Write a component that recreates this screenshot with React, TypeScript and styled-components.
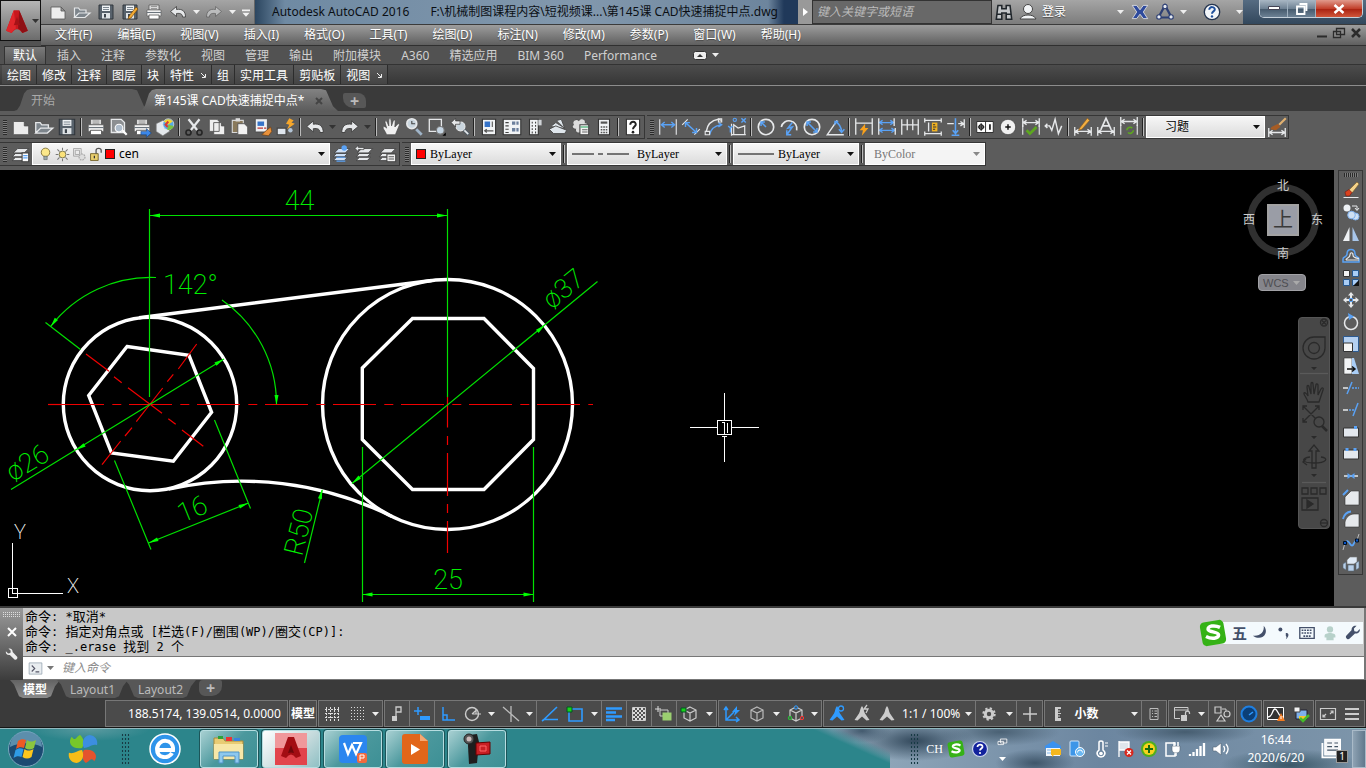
import React from "react";
import styled, { createGlobalStyle, css } from "styled-components";

const GlobalStyle = createGlobalStyle`
  *, *::before { box-sizing: border-box; }
  html, body { margin: 0; background: #3a3a3a; }
  body, button, select, input {
    font-family: "Noto Sans", "Noto Sans CJK SC", sans-serif;
    font-size: 12px;
    line-height: 16px;
  }
  button { border: 0; margin: 0; padding: 0; background: none; color: inherit; cursor: default; }
  a { color: inherit; text-decoration: none; }
`;

/* ---------- icons ---------- */

const W = "#e6e8ea";
const B = "#5aa2f5";
const D = "#2b2b2b";

const printer = (
  <>
    <path d="M5 3h10v5H5z" fill="#d9d9d9" stroke="#444" strokeWidth=".6" />
    <path d="M7 4.500h6M7 6.500h6" stroke="#999" />
    <path d="M3 8h14v6H3z" fill="#f2f2f2" stroke="#555" strokeWidth=".6" />
    <path d="M3 10.500h14" stroke="#6b747c" />
    <path d="M5 13h10v4H5z" fill="#fff" stroke="#555" strokeWidth=".8" />
  </>
);
const floppy = (
  <>
    <path d="M3 3h14v14H3z" fill="#58626c" stroke="#30363c" />
    <path d="M6 3.500h8v5.500H6z" fill="#f0f3f5" />
    <path d="M7 5.500h6M7 7.500h6" stroke="#7c8791" />
    <path d="M6 11h8v5.500H6z" fill="#dfe3e6" />
    <path d="M8 12h2v3.500H8z" fill="#3c444c" />
  </>
);
const undo = <path d="M2.500 9.500l6-5v3c6-1 9 2 9 7.500h-3c0-3-2-4-6-3.500v3z" fill={W} stroke="#3a3a3a" strokeWidth=".8" />;
const redo = <path d="M17.500 9.500l-6-5v3c-6-1-9 2-9 7.500h3c0-3 2-4 6-3.500v3z" fill={W} stroke="#3a3a3a" strokeWidth=".8" />;
const cube = (c: string) => (
  <path d="M10 3l6 3v8l-6 3-6-3V6zM4 6l6 3 6-3M10 9v8" fill="none" stroke={c} strokeWidth="1.200" />
);
const dimH = (y: number) => (
  <path d={`M2.500 ${y - 4}v8M17.500 ${y - 4}v8M3 ${y}h14M6 ${y - 2}l-3 2 3 2M14 ${y - 2}l3 2-3 2`} fill="none" stroke={W} strokeWidth="1.200" />
);
const layers = (c: string) => (
  <path d="M5 13h10l-3 3H2zM5 9.500h10l-3 3H2zM7 5h10l-4 4H3z" fill={c} stroke="#3a3a3a" strokeWidth=".7" />
);
const lens = (
  <>
    <path d="M13 12l5 5" stroke="#4e5c68" strokeWidth="3" />
    <path d="M14 13l3.500 3.500" stroke={W} strokeWidth="1.500" />
    <circle cx="10.500" cy="9.500" r="4" fill="#c9d5de" stroke={W} />
  </>
);
const annot = (c: string) => <path d="M10 2c2 2 1.500 5 3 7.500l4.500 6.500-3 .5L10 12.500l-4.500 4-3-.5L7 9.500C8.500 7 8 4 10 2z" fill={c} />;
const wrench = (c: string) => (
  <path d="M17.500 5.500l-3 3-3-.5-.5-3 3-3c-3-.8-6 1.500-5.500 4.700L2.500 13c-1.500 2 1.500 5 3.500 3.500l6.200-6c3.500.5 6-2 5.300-5z" fill={c} />
);

const icons: Record<string, React.ReactNode> = {
  new: <path d="M3 5h10l4 4v8H3zM13 5v4h4" fill="#ececec" stroke="#555" strokeWidth=".8" />,
  open: <path d="M2.500 15.500V6h4l1.500 2h6v3M2.500 15.500L7 11h11l-5 4.500z" fill="#7d858c" stroke={W} strokeWidth="1.200" />,
  save: floppy,
  saveAs: <>{floppy}<path d="M9 14l7-9 2 2-7 9-3 1z" fill="#f0a832" stroke="#6b4510" strokeWidth=".7" /></>,
  print: printer,
  undo, redo,
  redoOff: <g opacity=".5">{redo}</g>,
  customize: <path d="M5 7h10v2H5zM5.500 11h9L10 16z" fill="#f2f2f2" />,
  preview: <><path d="M3 3h9l3 3v9H3z" fill="#8c8f92" stroke={W} strokeWidth="1.200" /><circle cx="10" cy="11" r="3.500" fill="#aebccb" stroke="#fff" /><path d="M13 13l4 4" stroke="#fff" strokeWidth="2" /></>,
  publish: <>{printer}<path d="M9 14h5v-2.500l4.500 4-4.500 4V17H9z" fill="#3b86e8" stroke="#173b6b" strokeWidth=".5" /></>,
  web: <><path d="M2 7l6-3 6 3v7l-6 4-6-4z" fill="#e4e8ec" stroke="#777" strokeWidth=".6" /><circle cx="13" cy="7.500" r="5" fill="#56a9e6" stroke="#eee" strokeWidth=".6" /><path d="M9 5a5 5 0 0 1 8 0l-4 3z" fill="#f6d52e" /><path d="M13 8l5 1a5 5 0 0 1-6 3.500z" fill="#7ac143" /><path d="M13 5l-2.500 3 2 2" stroke="#d73a3a" strokeWidth="1.800" fill="none" /></>,
  cut: <><path d="M5 3l8 10M15 3L7 13" stroke={W} strokeWidth="2" /><circle cx="5" cy="15" r="2.300" fill="none" stroke="#262626" strokeWidth="1.500" /><circle cx="15" cy="15" r="2.300" fill="none" stroke="#262626" strokeWidth="1.500" /></>,
  copy: <path d="M3 3h7l2 2v9H3zM7 6h7l3 3v8H7zM14 6v3h3" fill="#efefef" stroke="#555" strokeWidth=".8" />,
  paste: <><path d="M3 4h10v11H3z" fill="#8a7a5c" stroke="#d8d8d8" /><path d="M6 2h4v3H6z" fill="#ddd" /><path d="M8 7h6l3 3v7H8z" fill="#f2f2f2" stroke="#555" strokeWidth=".8" /></>,
  match: <><path d="M3 2.500h11v12H3z" fill="#eef1f4" stroke="#444" strokeWidth=".7" /><path d="M5 5h6v4H5z" fill="#3573c9" /><path d="M5 11h5M11 11h2" stroke="#b33" /><path d="M12 14l5-4 1 4-3 4-6-1z" fill="#e8913b" stroke="#6b3c10" strokeWidth=".6" /></>,
  block: <><path d="M2 11h8v6H2z" fill="#dfe6ee" stroke="#444" /><circle cx="14" cy="13" r="2" fill="#b3c4d6" /><path d="M13 2l4 2-2 2 3 1-7 5 2-4-3-1z" fill="#f6a72b" /></>,
  hand: <path d="M6 17c-1-3-4-6-3-7s2 0 3 1L4.500 5.500c0-1.500 1.700-1.500 2 0L8 9V3.500c0-1.500 2-1.500 2 0l.5 5.500L12 4.500c.3-1.500 2-1 1.800.3L13.500 10 16 7.500c1-1 2.200 0 1.500 1L14 17z" fill="#f0f0f0" stroke="#444" strokeWidth=".6" />,
  zoomRt: <><circle cx="8" cy="7" r="4.500" fill="#c9d5de" stroke={W} strokeWidth="1.500" /><path d="M8 4.500V7h3" stroke="#444" fill="none" /><path d="M12 12l5 5" stroke="#9fb4c8" strokeWidth="2.500" /></>,
  zoomWin: <><path d="M3 3h11v11H3z" fill="none" stroke={W} strokeWidth="1.200" /><circle cx="13" cy="13" r="3.500" fill="#c4d4e2" stroke="#777" /><path d="M18 15v3h-3z" fill="#000" /></>,
  zoomPrev: <>{lens}<path d="M2 6l4-4v2.500h4v3H6V10z" fill={W} stroke="#333" strokeWidth=".6" /></>,
  props: <><path d="M4 3h12v14H4z" fill="#f1f3f5" stroke="#333" /><path d="M6 5h5v5H6z" fill="#3573c9" /><path d="M6 13.500h8M8 12l-2 1.500L8 15M13 5v5" stroke="#555" fill="none" /></>,
  dcenter: <><path d="M2 3h16v14H2z" fill="#f1f3f5" stroke="#333" /><path d="M4 6h3M4 9h3M4 12h3M4 15h3" stroke="#444" /><path d="M10 5h3v3h-3zM14 5h2v3h-2zM10 11h3v3h-3zM14 11h2v3h-2z" fill="#6b7f9c" /></>,
  palettes: <><path d="M5 3h8v14H5z" fill="#f1f3f5" stroke="#333" /><path d="M7 6h1M10 6h1M7 9h1M10 9h1M7 12h1M10 12h1M7 15h1M10 15h1" stroke="#444" strokeWidth="1.600" /><path d="M13 3.500h3v5h-3z" fill="#d0d4d8" /></>,
  sheets: <path d="M2 12l6-3 10 4-2 3H6zM4 9l4-3 8 5M9 4l4-1 3 8" fill="#dfe6ec" stroke="#444" strokeWidth=".8" />,
  markup: <><path d="M3 8c-2-4 3-6 5-4 2-3 7-1 6 2 3 0 3 4 1 5l-3 2c-2 4-8 3-7-1-3 0-4-3-2-4z" fill="#dcdcdc" stroke="#555" /><path d="M9 8h8v9H9z" fill="#f2f2f2" stroke="#444" /><path d="M9.500 10h7" stroke="#3a6" /><path d="M11 12.500h5M11 14.500h5" stroke="#666" /></>,
  calc: <><path d="M5 3h10v14H5z" fill="#f1f3f5" stroke="#333" /><path d="M7 5h6v2H7z" fill="#555" /><path d="M7 10h6M7 12.500h6M7 15h6" stroke="#555" strokeDasharray="1.500 .8" strokeWidth="1.500" /></>,
  help: <><path d="M4 3h12v14H4z" fill="#fff" stroke="#333" /><path d="M7.500 8c0-4 5.500-3.500 5 0-.3 1.500-2.500 2-2.500 4" fill="none" stroke="#222" strokeWidth="1.800" /><circle cx="10" cy="14.700" r="1.200" fill="#222" /></>,
  dimLin: <><path d="M2.500 3v14M17.500 3v14" stroke={W} /><path d="M4 8h12M7 5.500L4 8l3 2.500M13 5.500L16 8l-3 2.500" fill="none" stroke={B} strokeWidth="1.300" /></>,
  dimAli: <><path d="M2 8l5-5M13 17l5-5" stroke={W} /><path d="M5 6l10 9M5 10V6h4M15 11v4h-4" fill="none" stroke={B} strokeWidth="1.300" /></>,
  dimArc: <><path d="M3 14C4 7 8 4 14 3l3 1" stroke={W} fill="none" strokeWidth="1.300" /><path d="M6 17c1-5 4-8 10-9M14 6l3 2-3 2" fill="none" stroke={B} strokeWidth="1.200" /><path d="M2 14h4v3H2zM14 2.500h3v3h-3z" fill="none" stroke={W} /></>,
  dimOrd: <><path d="M7 17V8l4 3 6-2v8zM5 7v11M5 17h13" fill="none" stroke={W} strokeWidth="1.100" /><circle cx="8" cy="3.500" r="1.500" fill="none" stroke={B} /><path d="M14 2l4 4M18 2l-4 4M2 9l2 2 2-2M4 11v4" stroke={B} fill="none" strokeWidth="1.300" /></>,
  dimRad: <><circle cx="10" cy="10" r="7" fill="none" stroke={W} strokeWidth="1.500" /><path d="M10 10L5.500 5.500M5.500 9V5.500H9" stroke={B} fill="none" strokeWidth="1.400" /></>,
  dimJog: <><path d="M3 10a7 7 0 0 1 14 3" fill="none" stroke={W} strokeWidth="1.500" /><path d="M13 6l-4 5 4-1-5 7M8 13v4h4" stroke={B} fill="none" strokeWidth="1.400" /></>,
  dimDia: <><circle cx="10" cy="10" r="7" fill="none" stroke={W} strokeWidth="1.500" /><path d="M5.500 5.500l9 9M5.500 9V5.500H9M14.500 11v3.500H11" stroke={B} fill="none" strokeWidth="1.400" /></>,
  dimAng: <><path d="M12 4L3 17h15" fill="none" stroke={W} strokeWidth="1.300" /><path d="M10 5c4 2 6 5 6 10M13.500 12l2.500 3 2.500-3M10 8V5h3" stroke={B} fill="none" strokeWidth="1.300" /></>,
  dimQuick: <><path d="M2.500 2v15M17.500 2v15M3 6.500h14" stroke={W} fill="none" strokeWidth="1.200" /><path d="M11 7l-5 6h3l-1 5 6-7h-3z" fill="#f9a11b" /></>,
  dimBase: <><path d="M3 6h13M3 13h14M6 4L3 6l3 2M13 4l3 2-3 2M6 11l-3 2 3 2M14 11l3 2-3 2" stroke={B} fill="none" strokeWidth="1.200" /><path d="M2.500 2v15M16.500 2v7M17.500 11v6" stroke={W} strokeWidth="1.200" /></>,
  dimCont: <path d="M2.500 3v14M7.500 3v10M12.500 3v10M17.500 3v14M3 8h14" stroke={W} fill="none" strokeWidth="1.200" />,
  dimSpace: <><path d="M3 4h14M3 16h14M2.500 2v4M17.500 2v4M2.500 14v4M17.500 14v4M6 6v8" stroke={W} strokeWidth="1.200" fill="none" /><path d="M9 6h5v8H9z" fill="#f2b322" /><path d="M10 8h2M10 10h3M10 12h2" stroke="#333" /></>,
  dimBreak: <><path d="M2 7h6M12 7h5M14 5l3 2-3 2M17.500 3v8" stroke={W} strokeWidth="1.200" fill="none" /><path d="M9.500 2v14M6 17.500h7M7 13l2.500 3 2.500-3" stroke={B} strokeWidth="1.400" fill="none" /></>,
  tol: <><path d="M2.500 5h15v10h-15zM10.500 5v10" fill="#fff" stroke="#222" strokeWidth=".8" /><circle cx="6.500" cy="10" r="2" fill="none" stroke="#111" /><path d="M6.500 6.500v7M3.500 10h6" stroke="#111" /><path d="M14.500 7.500v5" stroke="#111" strokeWidth="1.500" /></>,
  center: <><circle cx="10" cy="10" r="7" fill="#f0f0f0" stroke="#333" strokeWidth=".6" /><path d="M10 7.500v5M7.500 10h5" stroke="#111" strokeWidth="1.300" /></>,
  inspect: <>{dimH(6)}<path d="M2.500 8v9M17.500 8v9" stroke={W} /><path d="M6 13l3 3 6-6" stroke="#5da71f" strokeWidth="2.500" fill="none" /></>,
  jogLine: <path d="M2 9h4l2 4 3-10 3 13 3-7M4 7L2 9l2 2" stroke={W} fill="none" strokeWidth="1.300" />,
  dimEdit: <>{dimH(14)}<path d="M7 11l7-9 2 2-7 8-3 1z" fill="#f4b042" stroke="#8a5312" strokeWidth=".5" /></>,
  dimText: <>{dimH(14)}<path d="M5.500 12L10 2l4.500 10M7 9h6" stroke={W} strokeWidth="1.500" fill="none" /></>,
  dimUpd: <>{dimH(5)}<path d="M2.500 8v9M17.500 8v9" stroke={W} /><path d="M8 13a3 3 0 0 1 5-2M14 13a3 3 0 0 1-5 2" stroke="#5da71f" strokeWidth="1.500" fill="none" /></>,
  dimStyle: <>{dimH(15)}<path d="M5 10l6-3 2 3-4 3-5-1z" fill="#a65c24" /><path d="M12 8l6-6" stroke="#e0b070" strokeWidth="2" /></>,
  layerProps: <>{layers(W)}<path d="M11 9h6v8h-6z" fill="#fff" stroke="#444" /><path d="M12 11.500h4M12 13.500h4" stroke={B} /></>,
  layerCur: <>{layers("#cfe0f5")}<path d="M5 16.500h8M5 13h8" stroke={B} /><circle cx="12" cy="4.500" r="2.500" fill={B} /></>,
  layerPrev: <>{layers(W)}<path d="M1 5l3-3v2h5v2H4v2z" fill={W} stroke="#333" strokeWidth=".6" /></>,
  layerState: <>{layers(W)}<path d="M9 10h8v7H9z" fill="#f2f2f2" stroke="#444" /><path d="M10.500 12.500h5M10.500 14.500h5" stroke="#555" /></>,
  bulb: <><circle cx="10" cy="7.500" r="5" fill="#fbe88a" stroke="#7a6a30" /><path d="M8 12h4v4H8z" fill="#9aa" stroke="#555" strokeWidth=".6" /></>,
  sun: <><circle cx="10" cy="10" r="4" fill="#fbe27a" stroke="#6b6b4a" /><path d="M10 2v3M10 15v3M2 10h3M15 10h3M4 4l2.500 2.500M13.500 13.500L16 16M16 4l-2.500 2.500M6.500 13.500L4 16" stroke="#777" strokeWidth="1.200" /></>,
  freeze: <><path d="M3 3h9v9H3zM5 5h5v5H5z" fill="none" stroke="#a0a0a0" /><circle cx="13" cy="13" r="3.500" fill="#ddd" stroke="#aaa" strokeDasharray="2 1" strokeWidth="1.500" /></>,
  lock: <><path d="M3 9h9v8H3z" fill="#e9cf6d" stroke="#6b5a1f" /><path d="M9.500 9V5c0-3 6-3 6 0v3" fill="none" stroke="#555" strokeWidth="1.500" /><path d="M7.500 11.500v3" stroke="#333" strokeWidth="1.500" /></>,
  binoc: <path d="M4.500 4h3.500v3h4V4h3.500L17 16.500h-5V11H8v5.500H3zM3 12h5M12 12h5" fill="#c3c6c9" stroke="#20262b" strokeWidth="1.400" />,
  user: <><circle cx="10" cy="7" r="4.500" fill="#f2f4f6" stroke="#444" /><path d="M2 17c1-3 5-4 8-4s7 1 8 4z" fill="#f2f4f6" stroke="#444" /></>,
  exchange: <><path d="M3 4h4l3 4 3-4h4l-4 6 4 6h-4l-3-4-3 4H3l4-6z" fill="#2e4a9c" stroke="#eee" strokeWidth=".7" /></>,
  a360: <><path d="M10 4l6 11H4z" fill="none" stroke="#2d3f74" strokeWidth="2" /><circle cx="10" cy="5" r="2" fill="#e8ecf2" stroke="#2d3f74" /><circle cx="4.500" cy="14.500" r="2" fill="#e8ecf2" stroke="#2d3f74" /><circle cx="15.500" cy="14.500" r="2" fill="#e8ecf2" stroke="#2d3f74" /></>,
  helpRound: <><circle cx="10" cy="10" r="7" fill="#f3f6fa" stroke="#24344f" strokeWidth="1.200" /><path d="M7.500 8c0-3.500 5.500-3 5 0-.3 1.500-2.500 1.500-2.500 3.500" fill="none" stroke="#1e4f9c" strokeWidth="1.800" /><circle cx="10" cy="14" r="1.100" fill="#1e4f9c" /></>,
  /* modify toolbar */
  erase: <><path d="M2.500 17.500h15" stroke={W} /><path d="M8 10l8-8 2 2-7 9z" fill="#f3d28b" stroke="#7a5a20" strokeWidth=".6" /><path d="M4 12l4-2.500 3 3L8.500 16H5z" fill="#d9421e" stroke="#611" strokeWidth=".5" /></>,
  mCopy: <><circle cx="6" cy="6" r="3.500" fill="#edf1f5" /><path d="M11 4h5v4M14 6l2 2.500L18 6" fill="none" stroke={W} /><circle cx="14.500" cy="14.500" r="3.500" fill="#cfe0f3" stroke="#7fb0ec" /><circle cx="10.500" cy="13" r="3.800" fill="#cfe0f3" stroke="#7fb0ec" /></>,
  mirror: <><path d="M8.500 3v14H2z" fill="#eef1f4" /><path d="M11.500 3v14H18z" fill="#a8c6ea" /></>,
  offset: <><path d="M2 13c0-3 4-1 4-5 0-6 8-6 8 0 0 4 4 2 4 5v3H2z" fill="none" stroke={B} strokeWidth="1.500" /><path d="M5 14c0-2 4-2 4-5 0-3 3-3 3 0 0 3 3 3 6 3.500M5 14h13" fill="none" stroke={W} strokeWidth="1.200" /></>,
  array: <><path d="M2.500 2.500h6v6h-6z" fill="#f2f2f2" stroke="#333" /><path d="M11.500 2.500h6v6h-6zM2.500 11.500h6v6h-6zM11.500 11.500h6v6h-6z" fill="#a9cdf6" stroke="#27588f" /><path d="M18 12v6h-6z" fill="#111" /></>,
  move: <><path d="M10 2l3 3.500h-2V8H9V5.500H7zM10 18l3-3.500h-2V12H9v2.500H7zM2 10l3.500-3v2H8v2H5.500v2zM18 10l-3.500-3v2H12v2h2.500v2z" fill={W} /><path d="M8.500 8.500h3v3h-3z" fill="#555" stroke={B} /></>,
  rotate: <><circle cx="10" cy="11" r="6.500" fill="none" stroke={W} strokeWidth="1.500" /><path d="M7 1l6 3.500L8 8z" fill={B} /></>,
  scale: <><path d="M2.500 2.500h15v15h-15z" fill="#b4d0f1" stroke="#2c5a91" /><path d="M2.500 9h9v8.500h-9z" fill="#f4f4f4" stroke="#333" /></>,
  stretch: <><path d="M3 2h8v16H3z" fill="#f2f4f6" stroke="#333" strokeWidth=".6" /><path d="M11 2h2l5 16h-7z" fill="#a9cdf6" /><path d="M6 13h7M11 10.500l3 2.500-3 2.500" fill="none" stroke="#111" strokeWidth="1.500" /></>,
  trim: <><path d="M2 10h5" stroke={W} strokeWidth="1.500" /><path d="M6 16l5-12" stroke={B} strokeWidth="1.500" /><path d="M11 10h7" stroke={B} strokeWidth="1.300" strokeDasharray="2 1" /></>,
  extend: <><path d="M2 10h5" stroke={W} strokeWidth="1.500" /><path d="M12 16l5-13" stroke={B} strokeWidth="1.500" /><path d="M8 10h6" stroke={B} strokeWidth="1.300" strokeDasharray="2 1" /></>,
  breakPt: <><path d="M2.500 6h15v9h-15z" fill="#e3e8ee" stroke="#333" /><path d="M13 4h3v3h-3z" fill={B} /></>,
  breakTwo: <><path d="M2.500 6h15v9h-15z" fill="#e3e8ee" stroke="#333" /><path d="M4.500 4h3v3h-3zM12.500 4h3v3h-3z" fill={B} /></>,
  join: <><path d="M3 10h14" stroke={W} strokeWidth="1.500" /><path d="M6.500 7l4 3-4 3zM13.500 7l-4 3 4 3z" fill={B} /></>,
  chamfer: <><path d="M4 9l6-6h8v14H4z" fill="#e6e9ec" stroke="#333" strokeWidth=".6" /><path d="M2 7l5-5" stroke={B} strokeWidth="2" /></>,
  fillet: <><path d="M4 17v-5c1-5 5-8 9-8h5v13z" fill="#e6e9ec" stroke="#333" strokeWidth=".6" /><path d="M2 9c1-4 4-7 8-7.500" stroke={B} fill="none" strokeWidth="2" /></>,
  blend: <><path d="M2 18l2-7M16 8l2-6" stroke="#bbb" /><path d="M4 11c4-6 5 5 8 2 1-1 1-4 4-5" fill="none" stroke={B} strokeWidth="1.800" /><path d="M2.500 9.500h3v3h-3zM14.500 7h3v3h-3z" fill="#0a53c7" stroke="#012" /></>,
  explode: <><path d="M6 6l3-3h7v5l-3 2H6z" fill="#dfeaf6" stroke="#777" strokeWidth=".6" /><path d="M2 10l3-2v8l-3-2zM7 11h6v6H7zM15 9l3-2v7l-3 2z" fill="#b7cfe9" stroke="#567" strokeWidth=".6" /></>,
  /* status bar */
  grid: <path d="M4.500 3v14M8.500 3v14M12.500 3v14M16.500 3v14M3 5.500h15M3 9.500h15M3 13.500h15" stroke="#ddd" strokeDasharray="2 1" />,
  snapDots: <path d="M4 3.500h13M4 6.500h13M4 9.500h13M4 12.500h13M4 15.500h13" stroke="#ddd" strokeDasharray="1 2" />,
  infer: <><path d="M9 3h5v5H9zM9 3v11" fill="none" stroke="#ccc" strokeWidth="1.300" /><path d="M5 12h5v5H5z" fill="#ccc" /></>,
  dyn: <><path d="M6 3v8M2 7h8" stroke="#2f9bff" strokeWidth="1.500" /><path d="M8 12h10v4H8z" fill="#2f9bff" /></>,
  ortho: <path d="M5 3v13h12M5 11h4v5" fill="none" stroke="#2f9bff" strokeWidth="1.500" />,
  polar: <><circle cx="9" cy="10" r="6.500" fill="none" stroke="#ccc" strokeWidth="1.400" /><path d="M9 10h9M9 10l5-4.500M13 5v5" stroke="#ccc" strokeWidth="1.200" /></>,
  iso: <path d="M2 3l16 14M10 2v16" stroke="#bbb" strokeWidth="1.300" />,
  otrack: <path d="M17 3L4 15.500h14M2 17l4-3" fill="none" stroke="#2f9bff" strokeWidth="1.600" />,
  osnap: <><path d="M4 5h13v12H4z" fill="none" stroke="#2f9bff" strokeWidth="1.600" /><path d="M2 3h5v5H2z" fill="#19d219" stroke="#052" /></>,
  lwt: <path d="M2 4.500h16M2 8.500h10M2 12.500h16M2 16h9" stroke="#2f9bff" strokeWidth="2.500" />,
  transp: <><path d="M3.500 3.500h13v13h-13z" fill="#555" stroke="#ccc" /><path d="M4 5h12M4 9h12M4 13h12" stroke="#ddd" strokeWidth="2" strokeDasharray="2 2" /><path d="M6 7h10M6 11h10M6 15h10" stroke="#ddd" strokeWidth="2" strokeDasharray="2 2" /></>,
  cycle: <><path d="M4 2v6M1 5h6" stroke="#ddd" /><path d="M6 6h8v3M6 6v6h3" stroke="#ccc" fill="none" /><path d="M8.500 8.500h9v8h-9z" fill="#9bcf70" /></>,
  osnap3: <>{cube("#ccc")}<path d="M1 4h5v4H1z" fill="#19d219" stroke="#052" /></>,
  ducs: <><path d="M4 3v13h13M4 16l8-8M2 6l2-3 2 3M14 13l3 3-3 2" fill="none" stroke="#2f9bff" strokeWidth="1.500" /><path d="M15 2l-5 6h3l-1 4 6-6h-3z" fill="#2f9bff" /></>,
  filter: cube("#bbb"),
  gizmo: <>{cube("#ccc")}<circle cx="10" cy="3.500" r="1.700" fill="#555" stroke="#2f9bff" /><circle cx="4" cy="14" r="1.700" fill="#555" stroke="#2c3" /><circle cx="16" cy="14" r="1.700" fill="#555" stroke="#f33" /></>,
  ann1: <>{annot("#2f9bff")}<circle cx="14" cy="4.500" r="2.500" fill="#444" stroke="#2f9bff" strokeWidth="1.300" /></>,
  ann2: <>{annot("#ccc")}<path d="M15 1l-3 4h4l-2 4" stroke="#ccc" strokeWidth="1.300" fill="none" /></>,
  ann3: annot("#ccc"),
  gear: <><circle cx="10" cy="10" r="3.700" fill="none" stroke="#ccc" strokeWidth="3" /><circle cx="10" cy="10" r="5.700" fill="none" stroke="#ccc" strokeWidth="2" strokeDasharray="2.240 2.240" /></>,
  plus: <path d="M10 3v14M3 10h14" stroke="#ccc" strokeWidth="1.500" />,
  ruler: <path d="M7 3h6v2h-3v1.500h2v1h-2V9h3v1h-3v1.500h2v1h-2V14h3v3H7z" fill="#ccc" />,
  qprops: <path d="M6 4.500h8v11H6zM8 7h1M10.500 7H13M8 9.500h1M10.500 9.500H13M8 12.500h1M10.500 12.500H13" fill="none" stroke="#bbb" />,
  lockUi: <><path d="M16 8V3.500H2.500v11H8M3 6h13" fill="none" stroke="#ccc" /><path d="M9 11h6v6H9z" fill="#ccc" /><path d="M13.500 11V9c0-2.500 4-2.500 4 0v1" fill="none" stroke="#ccc" strokeWidth="1.300" /></>,
  isolate: <><path d="M3 3h6v6H3zM9 11l4 6H5z" fill="none" stroke="#ccc" strokeWidth="1.200" /><circle cx="15" cy="10" r="3" fill="none" stroke="#ccc" strokeWidth="1.200" /><path d="M10 5h4v2" stroke="#ccc" fill="none" /></>,
  perf: <><circle cx="10" cy="10" r="7.500" fill="#0b3f78" stroke="#1f7fe0" strokeWidth="2" /><path d="M10 11l4-3" stroke="#2f9bff" strokeWidth="1.500" /></>,
  monitor: <><path d="M1.500 3.500h16v12h-16z" fill="#333" stroke="#fff" /><path d="M2 13c5 0 4-8 7-8s3 8 8 8" stroke="#fff" fill="none" strokeWidth="1.300" /><path d="M15 9l4 8h-8z" fill="#f07a20" /><path d="M15 12v3" stroke="#fff" /></>,
  fileOk: <><path d="M5 6h11v9H5z" fill="#7eb2ea" stroke="#223" /><path d="M3 3h6v5H3z" fill="#f2f2f2" stroke="#444" /><path d="M8 12h8v3H8z" fill="#f6c62c" /><path d="M9 14l3 3 6-6" stroke="#44bb2b" strokeWidth="2.500" fill="none" /></>,
  full: <path d="M2.500 4.500h15v11h-15zM5 13l3-3M5 10.500V13h2.500M15 7l-3 3M12.500 7H15v2.500" fill="none" stroke="#ccc" strokeWidth="1.200" />,
  menu: <path d="M3 5h14M3 10h14M3 15h14" stroke="#ccc" strokeWidth="1.800" />,
  /* floating IME bar and command window */
  wrench: wrench("#eee"),
  wrenchDark: wrench("#44506a"),
  moon: <path d="M13 2c7 8-2 18-12 11 8 1 13-4 12-11z" fill="#44506a" />,
  punct: <><circle cx="6" cy="6" r="2.200" fill="#44506a" /><path d="M12 10c4-1 4 4 0 7 1-2 1-3 0-4z" fill="#44506a" /></>,
  keyb: <><path d="M2 4h16v12H2z" fill="none" stroke="#44506a" strokeWidth="1.500" /><path d="M4 7h12M4 10h12M6 13.500h8" stroke="#44506a" strokeWidth="1.800" strokeDasharray="2 1" /></>,
  person: <><circle cx="10" cy="6" r="3.500" fill="#b7d1ca" /><path d="M4 13c0-4 12-4 12 0v2h-2v3H6v-3H4z" fill="#b7d1ca" /></>,
  prompt: <><path d="M1.500 2.500h17v15h-17z" fill="#e9edf0" stroke="#93a1ad" /><path d="M5 6l4 4-4 4M10 14.500h5" fill="none" stroke="#556" strokeWidth="1.500" /></>,
  /* tray */
  sogou: <><rect x="1.500" y="1.500" width="17" height="17" rx="3" fill="#35b216" transform="rotate(-10 10 10)" /><path d="M15 6c-4-2-9-1-8.500 1.500.5 2 7.500 1.500 7.500 4 0 2.500-5 3-9 1" fill="none" stroke="#fff" strokeWidth="2.500" /></>,
  helpBlue: <><circle cx="10" cy="10" r="7.500" fill="#12229c" stroke="#cdd6ee" strokeWidth="1.200" /><path d="M7.500 8c0-3.500 5.500-3 5 0-.3 1.500-2.500 1.500-2.500 3.500" fill="none" stroke="#fff" strokeWidth="1.800" /><circle cx="10" cy="14" r="1.100" fill="#fff" /></>,
  restore: <path d="M8 2.500h8v5H8zM5 5.500h7v4H5z" fill="#66788b" stroke="#fff" />,
  box: <><path d="M2 7l8-5 8 5v3H2z" fill="#3b92f0" /><path d="M3 9h14v8H3z" fill="#f2f6fa" /><path d="M4 11h12M4 14h12" stroke="#7fb6ec" /><path d="M8 10h10v6h-7l-2 2v-2H8z" fill="#f6b81f" /></>,
  sync: <><rect x="3" y="2" width="9" height="15" rx="1" fill="#3d96e8" stroke="#cfe4f8" /><circle cx="13" cy="13" r="4.500" fill="#6bb8f2" stroke="#fff" /><path d="M10.500 13.500a2.500 2.500 0 0 1 5 0" stroke="#fff" fill="none" /></>,
  thermo: <><path d="M8 3.500c0-2 4-2 4 0V11c4 3 1 7-2 7s-6-4-2-7z" fill="none" stroke="#fff" strokeWidth="1.500" /><circle cx="10" cy="14.500" r="1.800" fill="#fff" /><path d="M14 4h3M14 7h3" stroke="#fff" /></>,
  flag: <><path d="M4 2v16M4 3h10v8H4" fill="#dfe6ec" stroke="#fff" strokeWidth="1.300" /><circle cx="14" cy="13.500" r="4.500" fill="#d8261c" /><path d="M12 11.500l4 4M16 11.500l-4 4" stroke="#fff" strokeWidth="1.300" /></>,
  safe: <><circle cx="10" cy="10" r="8" fill="#4fae1e" /><circle cx="10" cy="10" r="6" fill="#f7d21c" /><path d="M10 6v8M6 10h8" stroke="#186b10" strokeWidth="2" /></>,
  power: <><path d="M3 4h9v13H3z" fill="none" stroke="#fff" strokeWidth="1.500" /><path d="M9 7h8v4c0 2-2 3-4 3s-4-1-4-3z" fill="#fff" stroke="#567" strokeWidth=".6" /><path d="M11 3v4M15 3v4M13 14v3" stroke="#fff" strokeWidth="1.500" /></>,
  signal: <path d="M3 17v-2M6.500 17v-4M10 17v-7M13.500 17V7M17 17V4" stroke="#fff" strokeWidth="2.300" />,
  sound: <><path d="M2 8h3l5-4v12l-5-4H2z" fill="#fff" stroke="#567" strokeWidth=".6" /><path d="M12.500 7c1.500 2 1.500 4 0 6M15 5c2.500 3 2.500 7 0 10" stroke="#fff" fill="none" strokeWidth="1.300" /></>,
  notice: <><path d="M4 2h13v13H4z" fill="#f4f6f8" stroke="#fff" /><path d="M6 5h4M6 8h4M12 5h3M12 8h3M6 11h9" stroke="#456" /><path d="M2 5v12h12" stroke="#fff" fill="none" strokeWidth="1.500" /></>,
};

const Svg = styled.svg<{ $s?: number }>`
  display: block;
  flex: none;
  width: ${(p) => p.$s ?? 22}px;
  height: ${(p) => p.$s ?? 22}px;
  overflow: visible;
`;
const Icon = ({ name, size }: { name: string; size?: number }) => (
  <Svg viewBox="0 0 20 20" $s={size} aria-hidden="true">{icons[name]}</Svg>
);
const CaretSvg = styled.svg`display: block; flex: none; width: 7px; height: 4px;`;
const Caret = ({ color = "#eee" }: { color?: string }) => (
  <CaretSvg viewBox="0 0 7 4" aria-hidden="true"><path d="M0 0h7L3.500 4z" fill={color} /></CaretSvg>
);

const IconButton = styled.button<{ $w?: number }>`
  display: flex;
  flex: none;
  align-items: center;
  justify-content: center;
  width: ${(p) => p.$w ?? 23}px;
  height: 100%;
`;
const Grip = styled.span`
  flex: none;
  width: 4px;
  height: 15px;
  margin: 0 2px 0 3px;
  background: repeating-linear-gradient(#2a2a2a 0 1px, #7d7d7d 1px 2px);
`;
const Spacer = styled.span`flex: 1;`;

/* ---------- header ---------- */

const Page = styled.div`
  display: flex;
  flex-direction: column;
  min-height: 100vh;
  color: #fff;
`;
const Header = styled.header`display: flex; height: 46px; background: #525252;`;
const AppButton = styled.button`
  display: flex;
  align-items: center;
  gap: 2px;
  width: 41px;
  height: 41px;
  padding-left: 3px;
  border: 1px solid #111;
  background: linear-gradient(#b5b5b5, #6c6c6c);
`;
const HeaderRows = styled.div`flex: 1; min-width: 0;`;
const TitleRow = styled.div`display: flex; height: 24px; background: #5d5d5d; overflow: hidden;`;
const ToolStrip = styled.div<{ $w: number }>`
  display: flex;
  flex: none;
  align-items: center;
  width: ${(p) => p.$w}px;
  background: linear-gradient(#a5a5a5, #7c7c7c);
`;
const QuickAccess = styled(ToolStrip)`padding-left: 5px; border-right: 1px solid #666;`;
const TitleText = styled.h1`
  display: flex;
  flex: 1;
  gap: 21px;
  min-width: 0;
  margin: 0;
  padding-left: 17px;
  overflow: hidden;
  font-size: 12px;
  font-weight: 400;
  line-height: 24px;
  white-space: nowrap;
  color: #0b0f14;
  background:
    linear-gradient(90deg, #2c4660 0, #6f8aa3 30px, #8298ad 60%, #6d859d calc(100% - 30px), #20395a calc(100% - 14px));
`;
const Arrow = styled.span`
  display: flex;
  align-items: center;
  justify-content: center;
  width: 14px;
  background: #999;
`;
const Search = styled.input`
  width: 180px;
  padding: 0 4px;
  border: 1px solid #333;
  background: #686868;
  color: #eee;
  font-style: italic;
  &::placeholder { color: #bbb; opacity: 1; }
`;
const Login = styled.button`width: 26px; color: #fff; text-align: right; text-shadow: 0 1px 1px #444;`;
const Chrome = styled.div`
  width: 123px;
  padding-left: 16px;
  background: linear-gradient(#566c82, #32475c);
`;
const WinButtons = styled.div`
  display: flex;
  width: 104px;
  height: 18px;
  overflow: hidden;
  border: 1px solid #c5d0da;
  border-top: 0;
  border-radius: 0 0 5px 5px;
`;
const WinButton = styled.button<{ $close?: boolean }>`
  display: flex;
  flex: ${(p) => (p.$close ? 47 : 28)};
  align-items: center;
  justify-content: center;
  border-right: ${(p) => (p.$close ? 0 : 1)}px solid #9fb0bf;
  background: ${(p) => (p.$close ? "linear-gradient(#e19a8c, #c2402c 50%, #a8200f 51%, #d0563a)" : "linear-gradient(#a9b7c4, #6f8294 50%, #44586b 51%, #6c8194)")};
`;
const MenuRow = styled.nav`
  display: flex;
  align-items: center;
  gap: 25px;
  height: 22px;
  padding: 0 4px 0 14px;
  border-top: 1px solid #3b3b3b;
  background: linear-gradient(#9d9d9d, #5f5f5f);
  border-bottom: 1px solid #303030;
  a { text-shadow: 0 1px 1px #444; white-space: nowrap; }
`;
const DocButtons = styled.div`display: flex; gap: 4px; margin-left: auto;`;

const Ribbon = styled.nav`
  display: flex;
  align-items: flex-end;
  height: 19px;
  padding-left: 5px;
  background: #525252;
  border-bottom: 1px solid #333;
`;
const RibbonTab = styled.a<{ $on?: boolean }>`
  height: 17px;
  padding: 1px ${(p) => (p.$on ? 8 : 10)}px 0;
  margin-right: ${(p) => (p.$on ? 2 : 0)}px;
  white-space: nowrap;
  color: ${(p) => (p.$on ? "#fff" : "#d0d0d0")};
  ${(p) => p.$on && css`
    background: linear-gradient(#7b7b7b, #575757);
    box-shadow: 0 0 0 1px #333;
  `}
`;
const RibbonToggle = styled.button`display: flex; align-items: center; gap: 5px; height: 18px; margin-left: 26px;`;
const Panels = styled.div`
  display: flex;
  height: 21px;
  padding-left: 2px;
  background: linear-gradient(#4c4c4c, #363636);
  border-bottom: 1px solid #8c8c8c;
`;
const Panel = styled.button`
  display: flex;
  align-items: center;
  gap: 7px;
  height: 19px;
  padding: 2px 5px 0;
  border-right: 1px solid #2c2c2c;
  white-space: nowrap;
  background: linear-gradient(#5a5a5a, #444);
`;

const DocTabs = styled.div`
  display: flex;
  align-items: flex-end;
  height: 25px;
  padding-left: 14px;
  background: #3a3a3a;
`;
const DocTab = styled.button<{ $w: number; $on?: boolean }>`
  display: flex;
  align-items: center;
  gap: 11px;
  width: ${(p) => p.$w}px;
  height: 22px;
  margin-right: -10px;
  padding: 1px 0 0 ${(p) => (p.$on ? 15 : 17)}px;
  white-space: nowrap;
  color: ${(p) => (p.$on ? "#fff" : "#aaa")};
  background: ${(p) => (p.$on ? "linear-gradient(#828282, #5c5c5c)" : "#5a5a5a")};
  clip-path: polygon(0 100%, 3px 96%, 6px 75%, 10px 20%, 13px 4%, 17px 0, calc(100% - 17px) 0, calc(100% - 12px) 6%, calc(100% - 5px) 78%, 100% 100%);
`;
const AddTab = styled.button<{ $flip?: boolean }>`
  width: 23px;
  height: ${(p) => (p.$flip ? 16 : 15)}px;
  margin: ${(p) => (p.$flip ? "0 0 0 6px" : "0 0 3px 15px")};
  border-radius: ${(p) => (p.$flip ? "4px 2px 10px 6px" : "2px 8px 2px 10px")};
  background: #575757;
  font-size: 16px;
  font-weight: 700;
  line-height: 14px;
  color: #bbb;
`;

/* ---------- toolbars ---------- */

const Docks = styled.div`
  display: flex;
  flex-direction: column;
  gap: 3px;
  height: 59px;
  padding-top: 4px;
  background: #5c5c5c;
`;
const DockRow = styled.div`display: flex; gap: 2px; height: 24px;`;
const Toolbar = styled.div`
  display: flex;
  flex: none;
  align-items: center;
  height: 24px;
  border: 1px solid #363636;
  border-left: 0;
`;
const Divider = styled.span`
  flex: none;
  width: 2px;
  height: 18px;
  margin: 0 2px;
  background: linear-gradient(90deg, #222 50%, #bbb 50%);
`;
const Combo = styled.label<{ $w: number; $off?: boolean }>`
  display: flex;
  flex: none;
  align-items: center;
  width: ${(p) => p.$w}px;
  height: 22px;
  padding: 0 4px;
  border: 1px solid #fff;
  color: ${(p) => (p.$off ? "#777" : "#000")};
  background: ${(p) => (p.$off ? "#f4f4f4" : "linear-gradient(#f6f6f6, #dcdcdc)")};
`;
const ComboSelect = styled.select<{ $serif?: boolean; $indent?: number }>`
  flex: 1;
  min-width: 0;
  height: 18px;
  padding: 0 0 0 ${(p) => p.$indent ?? 4}px;
  border: 0;
  appearance: none;
  background: none;
  color: inherit;
  opacity: 1;
  ${(p) => p.$serif && css`font-family: "Liberation Serif", serif;`}
`;
const Swatch = styled.span`flex: none; width: 10px; height: 10px; border: 1px solid #222; background: #f00;`;
const LineSample = styled.svg`flex: none; display: block; height: 10px;`;

const Tools = ({ items }: { items: string[] }) => (
  <>
    {items.map((it, i) =>
      it === "|" ? <Divider key={i} /> :
      it === "v" ? <IconButton key={i} $w={12} aria-label="列表"><Caret color="#333" /></IconButton> :
      <IconButton key={i} aria-label={it}><Icon name={it} /></IconButton>
    )}
  </>
);

/* ---------- drawing area ---------- */

const Work = styled.main`display: flex; flex: 1 0 436px;`;
const Canvas = styled.div`
  position: relative;
  flex: 1;
  min-width: 0;
  background: #000;
  overflow: hidden;
`;
const Drawing = styled.svg`
  position: absolute;
  inset: 0;
  width: 100%;
  height: 100%;
  text { font-family: Roboto, sans-serif; font-weight: 200; font-size: 27px; fill: #00f000; }
  text.axis { font-size: 20px; fill: #fff; }
`;
const ViewCube = styled.div`
  position: absolute;
  top: 8px;
  right: 9px;
  display: grid;
  grid-template-columns: 16px 52px 16px;
  grid-template-rows: 16px 52px 16px;
  place-items: center;
  width: 84px;
  color: #ccc;
  &::before {
    content: "";
    grid-area: 1 / 1 / 4 / 4;
    width: 72px;
    height: 72px;
    border: 7px solid #303030;
    border-radius: 50%;
  }
`;
const Compass = styled.span<{ $area: string }>`grid-area: ${(p) => p.$area}; z-index: 1;`;
const CubeFace = styled.button`
  grid-area: 2 / 2;
  z-index: 1;
  width: 32px;
  height: 32px;
  border: 2px solid #a2a2a2;
  background: #9a9da6;
  color: #3a3a3a;
  font-size: 20px;
  line-height: 26px;
`;
const Wcs = styled.button`
  position: absolute;
  top: 104px;
  right: 28px;
  display: flex;
  align-items: center;
  justify-content: space-between;
  width: 48px;
  height: 17px;
  padding: 0 5px 0 4px;
  border: 1px solid #a2a2a6;
  border-radius: 4px;
  background: #85858b;
  color: #4e4e52;
  font-family: "Liberation Sans", sans-serif;
  font-size: 11px;
`;
const NavBar = styled.div`
  position: absolute;
  top: 147px;
  right: 4px;
  width: 32px;
  height: 212px;
  border: 1px solid #555;
  border-radius: 4px;
  background: #474747;
`;
const SideDock = styled.div`width: 32px; padding-left: 4px; background: #5c5c5c;`;
const SideBar = styled.div`
  display: flex;
  flex-direction: column;
  align-items: center;
  width: 25px;
  height: 405px;
  border: 1px solid #363636;
`;
const SideGrip = styled.span`
  flex: none;
  width: 14px;
  height: 4px;
  margin: 2px 0;
  background: repeating-linear-gradient(90deg, #2a2a2a 0 1px, #7d7d7d 1px 2px);
`;
const SideButton = styled(IconButton)`height: 22px; flex: none;`;

/* Arrow head with its tip at (x, y), pointing along `a` degrees */
const Head = ({ x, y, a }: { x: number; y: number; a: number }) => (
  <path d="M0 0L-10-2V2z" transform={`translate(${x} ${y}) rotate(${a})`} fill="#00ff00" stroke="none" />
);

const CadDrawing = () => (
  <Drawing aria-label="drawing">
    <g transform="translate(0 -170)">
      <g fill="none" stroke="#fff" strokeWidth="3.400">
        <circle cx="150" cy="404" r="86.700" />
        <circle cx="447.500" cy="404.500" r="125" />
        <path d="M127 346.500L189 355.300 211.600 412.300 173.300 461.300 111.500 453 88.700 395.500z" />
        <path d="M412.500 318.500H484L533.500 368.500V439.500L484 489.500H412.500L362.300 439.500V368z" />
        <path d="M139 317.700L431.500 280.500M168.500 489.200A338.600 338.600 0 0 1 392 516.400" />
      </g>
      <g fill="none" stroke="#f00000" strokeWidth="1.200">
        <path d="M48 404.500H62" />
        <path d="M61 404.500H593" strokeDasharray="43 8.300 9 7.700" />
        <path d="M447.500 397V427.500M447.500 436v9M447.500 453v43M447.500 504v9M447.500 521v32" />
        <path d="M86 354L109 371.300M114 376.700l7.700 6M128 387.700L162 413.300M168.300 418.700l7.400 5.600M182 430L203.300 446.300" />
        <path d="M196.700 344L178.300 369M173.300 374.300l-6 7.400M162.700 388L136.300 421.700M132 427.700l-7 8.300M120.700 441L102 464.700" />
      </g>
      <g fill="none" stroke="#00e000" strokeWidth="1.200">
        <path d="M149.500 209V397M447.500 209V397M150 215.500H447" />
        <path d="M156 277.500A127 127 0 0 0 50.500 326.500M222 300A127 127 0 0 1 276.500 404" />
        <path d="M45.500 322.500L80.500 349.500" />
        <path d="M11 489.500L224 359M352 483.500L597.500 281.500" />
        <path d="M114.500 460.500L151 549.500M214.500 420L250.500 508.500M148.500 543L248.500 503" />
        <path d="M304.500 563L322.300 490" />
        <path d="M362.500 447V602M533.500 447V602M363 594.500H533" />
      </g>
      <Head x={150} y={215.5} a={180} /><Head x={447} y={215.5} a={0} />
      <Head x={50.5} y={327} a={126} /><Head x={276.5} y={405} a={90} />
      <Head x={76} y={450} a={149} /><Head x={224} y={359} a={-31} />
      <Head x={352} y={483.5} a={140.5} /><Head x={545} y={325} a={-39.5} />
      <Head x={148.5} y={543} a={158} /><Head x={248.5} y={503} a={-22} />
      <Head x={322.3} y={489} a={-76} />
      <Head x={362.5} y={594.5} a={180} /><Head x={533.5} y={594.5} a={0} />
      <text x="299.500" y="210" textAnchor="middle">44</text>
      <text x="163" y="294">142°</text>
      <text x="448" y="589" textAnchor="middle">25</text>
      <text transform="translate(13 482) rotate(-31)">ø26</text>
      <text transform="translate(552 310) rotate(-39.500)">ø37</text>
      <text transform="translate(182 523) rotate(-22)">16</text>
      <text transform="translate(302 557) rotate(-76)">R50</text>
      <g fill="none" stroke="#fff" shapeRendering="crispEdges">
        <path d="M12.500 543V593.500H63M8.500 588.500h9v9h-9z" />
        <path d="M690 427.500H717M732 427.500H759M724.500 393V420M724.500 436V462" />
        <path d="M717.500 420.500h14v14h-14zM722 422.500h3M724.500 422V434M722 436.500h5M727.500 423v10" />
      </g>
      <text className="axis" x="14" y="539">Y</text>
      <text className="axis" x="67" y="593">X</text>
    </g>
  </Drawing>
);

const NavIcons = () => (
  <svg width="30" height="210" viewBox="0 0 30 210" fill="none" stroke="#2a2a2a" strokeWidth="1.300" aria-hidden="true">
    <circle cx="25" cy="4.500" r="3.500" /><path d="M23 2.500l4 4M27 2.500l-4 4" />
    <path d="M15 19H26V30A11 11 0 1 1 15 19z" /><circle cx="15" cy="30" r="5.500" />
    <path d="M1 55.500H29" stroke="#5a5a5a" />
    <path d="M12 49h6l-3 3zM12 118h6l-3 3zM12 156h6l-3 3z" fill="#2a2a2a" stroke="none" />
    <path d="M9 84c-1-4-5-8-4-9s3 1 4 3l-1-9c0-2 2-2 2 0l2 7v-10c0-2 2-2 2 0l1 10 2-9c0-2 2-1 2 0v10l3-6c1-2 3-1 2 1l-4 12z" />
    <path d="M4 88l16 16M20 88L4 104M4 92v-4h4M16 88h4v4M4 100v4h4" /><circle cx="20" cy="104" r="5" fill="#474747" /><path d="M23 108l5 5" strokeWidth="2.500" />
    <path d="M13 150v-17h-3l5-6 5 6h-3v17z" /><path d="M11 139c-9 1-9 6 4 6s15-5 7-6M7 141l-3 3 4 3" />
    <path d="M3 164.500h24" stroke="#5a5a5a" />
    <path d="M3 170h6v6H3zM12 170h6v6h-6zM21 170h6v6h-6zM3 180h16v12H3z" /><path d="M8 182v8l6-4z" fill="#2a2a2a" />
    <circle cx="25" cy="205" r="3.500" /><path d="M22 205h6" />
  </svg>
);

/* ---------- command window ---------- */

const Command = styled.section`
  position: relative;
  display: flex;
  height: 72px;
  margin-top: 2px;
  border-right: 2px solid #777;
`;
const CommandSide = styled.div`
  display: flex;
  flex-direction: column;
  align-items: center;
  gap: 6px;
  width: 23px;
  padding-top: 4px;
  background: linear-gradient(#9a9a9a, #3c3c3c);
`;
const CommandGrip = styled.svg`display: block; flex: none; width: 17px; height: 6px;`;
const SideControl = styled(IconButton)`height: 16px;`;
const CommandMain = styled.div`flex: 1; min-width: 0; background: #c8c8c8; color: #000;`;
const History = styled.div`
  height: 48px;
  padding: 1px 2px;
  font-family: "DejaVu Sans Mono", "Noto Sans CJK SC", monospace;
  font-size: 12px;
  line-height: 15px;
  white-space: pre;
`;
const Line = styled.div`height: 15px;`;
const Han = styled.span`font-size: 13px;`;
const Prompt = styled.div`
  display: flex;
  align-items: center;
  gap: 4px;
  height: 24px;
  padding-left: 5px;
  border-top: 1px solid #777;
  border-bottom: 1px solid #777;
  background: #fff;
`;
const PromptInput = styled.input`
  flex: 1;
  min-width: 0;
  padding: 0 4px;
  border: 0;
  outline: 0;
  background: none;
  font-size: 12px;
  font-style: italic;
  &::placeholder { color: #8a8a8a; opacity: 1; }
`;
const ImeBar = styled.div`
  position: absolute;
  top: 14px;
  right: 1px;
  display: flex;
  align-items: center;
  justify-content: space-between;
  width: 164px;
  height: 22px;
  padding-right: 1px;
  background: linear-gradient(90deg, transparent 20px, #f4fafd 20px);
  color: #44506a;
  font-weight: 700;
  font-size: 15px;
`;

const Layouts = styled.nav`
  display: flex;
  align-items: flex-start;
  height: 20px;
  padding-left: 10px;
  background: #3a3a3a;
`;
const Layout = styled.button<{ $on?: boolean; $w: number }>`
  width: ${(p) => p.$w}px;
  height: 18px;
  margin-right: -3px;
  padding-top: 2px;
  font-weight: ${(p) => (p.$on ? 700 : 400)};
  color: ${(p) => (p.$on ? "#fff" : "#bbb")};
  background: ${(p) => (p.$on ? "linear-gradient(#626262, #8a8a8a)" : "#575757")};
  clip-path: polygon(0 0, 100% 0, calc(100% - 5px) 35%, calc(100% - 9px) 90%, calc(100% - 13px) 100%, 13px 100%, 9px 90%, 4px 25%);
`;

/* ---------- status bar ---------- */

const Status = styled.footer`display: flex; height: 28px; background: #3a3a3a;`;
const Group = styled.div`
  display: flex;
  flex: none;
  height: 27px;
  margin-right: 1px;
  border: 1px solid #777;
  background: #4b4b4b;
`;
const Cell = styled.div<{ $w: number; $end?: boolean }>`
  display: flex;
  align-items: center;
  justify-content: space-around;
  width: ${(p) => p.$w}px;
  height: 25px;
  white-space: nowrap;
  border-right: ${(p) => (p.$end ? 0 : 1)}px solid #777;
`;
const CellButton = styled.button`display: flex; align-items: center;`;
const Units = styled.b`margin-right: 26px;`;
const cells = (list: [number, string[]][]) =>
  list.map(([w, names], i) => (
    <Cell key={i} $w={w} $end={i === list.length - 1}>
      {names.map((n, j) =>
        n === "v" ? <CellButton key={j} aria-label="列表"><Caret /></CellButton> :
        icons[n] ? <CellButton key={j} aria-label={n}><Icon name={n} size={20} /></CellButton> :
        <CellButton key={j}>{n}</CellButton>
      )}
    </Cell>
  ));

/* ---------- taskbar ---------- */

const Taskbar = styled.footer`
  display: flex;
  align-items: center;
  height: 40px;
  padding-left: 7px;
  border-top: 1px solid #8fb7bd;
  box-shadow: 0 -1px #151515;
  background:
    radial-gradient(ellipse 60px 12px at 90px 0, #5b9aa0, transparent),
    linear-gradient(24deg, #2c858b 0, #2c858b 92%, transparent 95%) 0 0 / 890px 100% no-repeat,
    radial-gradient(ellipse 30px 12px at 862px 2px, #435a6e, transparent),
    radial-gradient(ellipse 60px 20px at 915px 12px, #33495c, transparent),
    radial-gradient(ellipse 40px 14px at 1035px 34px, #3f566a, transparent),
    radial-gradient(ellipse 70px 12px at 1185px 3px, #465d70, transparent),
    radial-gradient(ellipse 60px 14px at 1000px 3px, #4a6174, transparent),
    radial-gradient(ellipse 70px 16px at 1290px 36px, #3a5868, transparent),
    linear-gradient(90deg, #7e98ad 800px, #8fa6b9 880px, #6c86a0 1100px, #7d95aa 100%);
`;
const TaskIcon = styled.button<{ $w: number }>`
  display: flex;
  flex: none;
  align-items: center;
  justify-content: center;
  width: ${(p) => p.$w}px;
  height: 38px;
`;
const TaskButton = styled(TaskIcon)<{ $on?: boolean }>`
  margin-right: 4px;
  border: 1px solid #b6dde0;
  border-radius: 3px;
  box-shadow: 0 0 0 1px #1c5559;
  background: ${(p) => (p.$on ? "linear-gradient(135deg, #fff, #c3d9db 60%, #8fc0c4)" : "linear-gradient(135deg, #a8d0d2, #4b989d 50%, #3d9095)")};
`;
const DotGrip = styled.span`
  flex: none;
  width: 9px;
  height: 32px;
  background: radial-gradient(circle, #173a44 40%, transparent 45%) 0 0 / 3px 4px;
`;
const Tray = styled.div`display: flex; align-items: center; gap: 2px; margin-left: auto; height: 100%;`;
const TrayButton = styled(IconButton)`width: 22px; height: 22px;`;
const Lang = styled.span`width: 22px; text-align: right; font-family: "Liberation Serif", serif; font-size: 12px;`;
const TrayStack = styled.span`display: flex; flex-direction: column; align-items: center; gap: 4px; width: 18px; margin: 0 29px 0 0;`;
const Clock = styled.time`
  display: flex;
  flex-direction: column;
  width: 80px;
  padding-left: 4px;
  text-align: center;
  line-height: 18px;
`;
const Notice = styled.button`position: relative; width: 32px; height: 28px; padding-left: 4px;`;
const Count = styled.span`
  position: absolute;
  right: 0;
  bottom: 0;
  width: 12px;
  border: 1px solid #999;
  background: #222;
  font-size: 10px;
  line-height: 11px;
`;
const ShowDesktop = styled.button`
  width: 14px;
  height: 38px;
  margin-left: 2px;
  border: 1px solid #a9bac8;
  background: linear-gradient(90deg, #8ea2b3, #60788c);
`;

const AcadLogo = ({ size }: { size: number }) => (
  <Svg $s={size} viewBox="0 0 24 24" aria-hidden="true">
    <path d="M9 2h5l8 19-5 2q-5-7-10 0l-5-2z" fill="#c8171d" />
    <path d="M14 2l8 19-5 2q-2-3-4-4z" fill="#8e1015" />
    <path d="M9 2l-7 19 5 2q2-3 4-4z" fill="#e0262b" />
    <path d="M12 8l3 8q-3-1-6 0z" fill="#a51217" />
  </Svg>
);

const menus = ["文件(F)", "编辑(E)", "视图(V)", "插入(I)", "格式(O)", "工具(T)", "绘图(D)", "标注(N)", "修改(M)", "参数(P)", "窗口(W)", "帮助(H)"];
const ribbon = ["默认", "插入", "注释", "参数化", "视图", "管理", "输出", "附加模块", "A360", "精选应用", "BIM 360", "Performance"];
const panels = ["绘图", "修改", "注释", "图层", "块", "特性>", "组", "实用工具", "剪贴板", "视图>"];
const standard = "new open save | print preview publish web | cut copy paste match block | undo v redo v | hand zoomRt zoomWin zoomPrev | props dcenter palettes sheets markup calc | help".split(" ");
const dims = "dimLin dimAli dimArc dimOrd | dimRad dimJog dimDia dimAng | dimQuick dimBase dimCont dimSpace dimBreak | tol center inspect jogLine | dimEdit dimText dimUpd |".split(" ");
const modify = "erase mCopy mirror offset array move rotate scale stretch trim extend breakPt breakTwo join chamfer fillet blend explode".split(" ");

export default function App() {
  return (
    <Page>
      <GlobalStyle />
      <Header>
        <AppButton aria-label="应用程序菜单"><AcadLogo size={26} /><Caret color="#333" /></AppButton>
        <HeaderRows>
          <TitleRow>
            <QuickAccess $w={214}>
              {["new", "open", "save", "saveAs", "print", "undo"].map((n) => (
                <IconButton key={n} $w={24} aria-label={n}><Icon name={n} size={20} /></IconButton>
              ))}
              <IconButton $w={12} aria-label="放弃列表"><Caret /></IconButton>
              <IconButton $w={24} aria-label="重做"><Icon name="redoOff" size={20} /></IconButton>
              <IconButton $w={12} aria-label="重做列表"><Caret /></IconButton>
              <IconButton $w={16} aria-label="自定义"><Icon name="customize" size={16} /></IconButton>
            </QuickAccess>
            <TitleText>
              <span>Autodesk AutoCAD 2016</span>
              <span>F:\机械制图课程内容\短视频课...\第145课 CAD快速捕捉中点.dwg</span>
            </TitleText>
            <Arrow><svg width="5" height="8" aria-hidden="true"><path d="M0 0l5 4-5 4z" fill="#fff" /></svg></Arrow>
            <Search aria-label="搜索" placeholder="键入关键字或短语" />
            <ToolStrip $w={251}>
              <IconButton $w={24} aria-label="搜索"><Icon name="binoc" /></IconButton>
              <IconButton $w={24} aria-label="用户"><Icon name="user" size={20} /></IconButton>
              <Login>登录</Login>
              <Spacer />
              <IconButton $w={14} aria-label="登录列表"><Caret /></IconButton>
              <IconButton $w={26} aria-label="Exchange"><Icon name="exchange" /></IconButton>
              <IconButton $w={24} aria-label="A360"><Icon name="a360" /></IconButton>
              <IconButton $w={12} aria-label="A360 列表"><Caret /></IconButton>
              <IconButton $w={46} aria-label="帮助"><Icon name="helpRound" /></IconButton>
              <IconButton $w={8} aria-label="帮助列表"><Caret /></IconButton>
            </ToolStrip>
            <Chrome>
              <WinButtons>
                <WinButton aria-label="最小化"><svg width="12" height="5"><path d="M.5.500h11v3H.5z" fill="#fff" stroke="#445" /></svg></WinButton>
                <WinButton aria-label="还原"><svg width="12" height="12"><path d="M3.500 1h7v7M1 3.500h7.500V11H1z" fill="none" stroke="#fff" strokeWidth="1.800" /></svg></WinButton>
                <WinButton $close aria-label="关闭"><svg width="12" height="10"><path d="M1.500 1l9 8M10.500 1l-9 8" stroke="#fff" strokeWidth="2.500" /></svg></WinButton>
              </WinButtons>
            </Chrome>
          </TitleRow>
          <MenuRow>
            {menus.map((m) => <a key={m} href="#menu">{m}</a>)}
            <DocButtons>
              <button aria-label="最小化图形"><svg width="12" height="12"><path d="M1 9.500h10" stroke={D} strokeWidth="2" /></svg></button>
              <button aria-label="还原图形"><svg width="14" height="12"><path d="M4.500 1.500h8v6h-8zM1.500 4.500h7v6h-7z" fill="#8a8a8a" stroke={D} strokeWidth="1.300" /></svg></button>
              <button aria-label="关闭图形"><svg width="12" height="12"><path d="M2 2l8 8M10 2l-8 8" stroke={D} strokeWidth="2.500" /></svg></button>
            </DocButtons>
          </MenuRow>
        </HeaderRows>
      </Header>
      <Ribbon>
        {ribbon.map((t, i) => <RibbonTab key={t} href="#ribbon" $on={i === 0}>{t}</RibbonTab>)}
        <RibbonToggle aria-label="最小化功能区">
          <svg width="14" height="9"><rect x=".5" y=".5" width="13" height="8" rx="2" fill="#eee" stroke="#333" /><path d="M4 6l3-3 3 3z" fill="#333" /></svg>
          <Caret />
        </RibbonToggle>
      </Ribbon>
      <Panels>
        {panels.map((p, i) => (
          <Panel key={i}>
            {p.replace(">", "")}
            {p.endsWith(">") && <svg width="5" height="5"><path d="M0 0l4 4M4.500 1v3.500H1" stroke="#eee" fill="none" /></svg>}
          </Panel>
        ))}
      </Panels>
      <DocTabs>
        <DocTab $w={135}>开始</DocTab>
        <DocTab $w={199} $on>
          第145课 CAD快速捕捉中点*
          <svg width="8" height="8"><path d="M1 1l6 6M7 1L1 7" stroke="#444" strokeWidth="2" /></svg>
        </DocTab>
        <AddTab aria-label="新图形">+</AddTab>
      </DocTabs>
      <Docks>
        <DockRow>
          <Toolbar><Grip /><Tools items={standard} /></Toolbar>
          <Toolbar>
            <Grip /><Tools items={dims} />
            <Combo $w={119}>
              <ComboSelect aria-label="标注样式" $indent={14}><option>习题</option></ComboSelect><Caret color="#111" />
            </Combo>
            <IconButton aria-label="dimStyle"><Icon name="dimStyle" /></IconButton>
          </Toolbar>
        </DockRow>
        <DockRow>
          <Toolbar>
            <Grip /><Tools items={["layerProps"]} />
            <Combo $w={298}>
              {["bulb", "sun", "freeze", "lock"].map((n) => <Icon key={n} name={n} size={17} />)}
              <Swatch />
              <ComboSelect aria-label="图层"><option>cen</option></ComboSelect><Caret color="#111" />
            </Combo>
            <Tools items={["layerCur", "layerPrev", "layerState"]} />
          </Toolbar>
          <Toolbar>
            <Grip />
            <Combo $w={150}>
              <Swatch /><ComboSelect aria-label="颜色" $serif><option>ByLayer</option></ComboSelect><Caret color="#111" />
            </Combo>
            <Divider />
            <Combo $w={160}>
              <LineSample width="58"><path d="M0 5h22M26 5h5M35 5h22" stroke="#000" /></LineSample>
              <ComboSelect aria-label="线型" $serif $indent={7}><option>ByLayer</option></ComboSelect><Caret color="#111" />
            </Combo>
            <Divider />
            <Combo $w={126}>
              <LineSample width="36"><path d="M0 5h36" stroke="#000" /></LineSample>
              <ComboSelect aria-label="线宽" $serif><option>ByLayer</option></ComboSelect><Caret color="#111" />
            </Combo>
            <Divider />
            <Combo $w={120} $off>
              <ComboSelect aria-label="打印样式" $serif><option>ByColor</option></ComboSelect><Caret color="#888" />
            </Combo>
          </Toolbar>
        </DockRow>
      </Docks>
      <Work>
        <Canvas>
          <CadDrawing />
          <ViewCube>
            <Compass $area="1 / 2">北</Compass><Compass $area="2 / 1">西</Compass>
            <Compass $area="2 / 3">东</Compass><Compass $area="3 / 2">南</Compass>
            <CubeFace>上</CubeFace>
          </ViewCube>
          <Wcs>WCS <Caret color="#aaa" /></Wcs>
          <NavBar><NavIcons /></NavBar>
        </Canvas>
        <SideDock>
          <SideBar>
            <SideGrip />
            {modify.map((n) => <SideButton key={n} aria-label={n}><Icon name={n} size={20} /></SideButton>)}
          </SideBar>
        </SideDock>
      </Work>
      <Command>
        <CommandSide>
          <CommandGrip aria-hidden="true"><path d="M0 .5h17M0 2.500h17M0 4.500h17" stroke="#ddd" strokeDasharray="1 1" /></CommandGrip>
          <SideControl $w={16} aria-label="关闭命令行"><svg width="10" height="10"><path d="M1 1l8 8M9 1L1 9" stroke="#fff" strokeWidth="2" /></svg></SideControl>
          <SideControl $w={20} aria-label="自定义命令行"><Svg $s={15} viewBox="0 0 20 20" transform="scale(-1 1)">{icons.wrench}</Svg></SideControl>
        </CommandSide>
        <CommandMain>
          <History>
            <Line><Han>命令</Han>: *<Han>取消</Han>*</Line>
            <Line><Han>命令</Han>: <Han>指定对角点或</Han> [<Han>栏选</Han>(F)/<Han>圈围</Han>(WP)/<Han>圈交</Han>(CP)]:</Line>
            <Line><Han>命令</Han>: _.erase <Han>找到</Han> 2 <Han>个</Han></Line>
          </History>
          <Prompt>
            <Icon name="prompt" size={15} /><Caret color="#777" />
            <PromptInput aria-label="命令" placeholder="键入命令" />
          </Prompt>
        </CommandMain>
        <ImeBar>
          <Icon name="sogou" size={28} />
          <span>五</span>
          {["moon", "punct", "keyb", "person", "wrenchDark"].map((n) => <Icon key={n} name={n} size={18} />)}
        </ImeBar>
      </Command>
      <Layouts>
        <Layout $w={50} $on>模型</Layout>
        <Layout $w={71}>Layout1</Layout>
        <Layout $w={71}>Layout2</Layout>
        <AddTab $flip aria-label="新布局">+</AddTab>
      </Layouts>
      <Status>
        <Spacer />
        <Group><Cell $w={181} $end><Spacer />188.5174, 139.0514, 0.0000&nbsp;&nbsp;</Cell></Group>
        <Group><Cell $w={26} $end><b>模型</b></Cell></Group>
        <Group>{cells([[63, ["grid", "snapDots", "v"]]])}</Group>
        <Group>{cells([[25, ["infer"]], [25, ["dyn"]], [102, ["ortho", "polar", "v", "iso", "v"]], [65, ["otrack", "osnap", "v"]], [25, ["lwt"]], [25, ["transp"]], [25, ["cycle"]], [39, ["osnap3", "v"]]])}</Group>
        <Group>{cells([[102, ["ducs", "filter", "v", "gizmo", "v"]]])}</Group>
        <Group>{cells([[152, ["ann1", "ann2", "ann3", "1:1 / 100%", "v"]], [41, ["gear", "v"]], [25, ["plus"]]])}</Group>
        <Group>
          <Cell $w={97}>
            <CellButton aria-label="单位"><Icon name="ruler" size={20} /></CellButton>
            <Units>小数</Units>
            <CellButton aria-label="列表"><Caret /></CellButton>
          </Cell>
          {cells([[24, ["qprops"]]])}
        </Group>
        <Group>{cells([[40, ["lockUi", "v"]], [25, ["isolate"]]])}</Group>
        <Group>{cells([[24, ["perf"]]])}</Group>
        <Group>{cells([[49, ["monitor", "fileOk"]]])}</Group>
        <Group>{cells([[48, ["full", "menu"]]])}</Group>
      </Status>
      <Taskbar>
        <TaskIcon $w={38} aria-label="开始">
          <Svg $s={38} viewBox="0 0 38 38">
            <circle cx="19" cy="19" r="17.500" fill="#1b4a72" stroke="#7aa6bd" />
            <path d="M3 17a16 16 0 0 1 32 0c-10-5-22-5-32 0z" fill="#6d9fba" opacity=".8" />
            <path d="M11 11c3-2 5-2 8-1l-2 8c-3-1-5-1-8 1z" fill="#ee5a24" /><path d="M20 10c3 2 5 2 9 0l-2 8c-3 2-6 2-9 0z" fill="#8bc53f" />
            <path d="M8.500 20c3-2 5-2 8-1l-2 8c-3-1-5-1-8 1z" fill="#2f9be6" /><path d="M17.500 19c3 2 5 2 9 0l-2 8c-3 2-6 2-9 0z" fill="#fcc61c" />
          </Svg>
        </TaskIcon>
        <TaskIcon $w={76} aria-label="360">
          <Svg $s={30} viewBox="0 0 32 32">
            <path d="M15 15C4 17-1 9 4 3c4 6 5-1 9-2 4 4 5 9 2 14z" fill="#77c729" /><path d="M17 15C14 8 17 2 23 1c7 1 9 6 8 11-5-2-9 3-14 3z" fill="#3c8ee0" />
            <path d="M17 17c11-2 16 6 11 12-4-5-5 1-9 2-4-4-5-9-2-14z" fill="#e4532e" /><path d="M15 17c3 7 0 13-6 14-7-1-9-6-8-11 5 2 9-3 14-3z" fill="#f8bd17" />
          </Svg>
        </TaskIcon>
        <DotGrip />
        <TaskIcon $w={70} aria-label="浏览器">
          <Svg $s={32} viewBox="0 0 32 32">
            <circle cx="16" cy="16" r="15" fill="#2e94ea" stroke="#fff" strokeWidth="1.500" />
            <path d="M8 17h16c1-12-15-12-16-1 0 10 12 10 15 4" fill="none" stroke="#fff" strokeWidth="4" />
          </Svg>
        </TaskIcon>
        <TaskButton $w={58} aria-label="资源管理器">
          <Svg $s={32} viewBox="0 0 32 32">
            <path d="M1 5h9l2 3h18v18H1z" fill="#e8cc74" stroke="#a88a38" /><path d="M5 3h5v3H5z" fill="#2da33a" /><path d="M13 4h6v4h-6z" fill="#e33" /><path d="M21 5h6v3h-6z" fill="#3a82e0" />
            <path d="M1 11h29v15H1z" fill="#f7e7a8" /><path d="M6 30V19h20v11h-4v-7H10v7z" fill="#8dc8ee" stroke="#4e93c6" />
          </Svg>
        </TaskButton>
        <TaskButton $w={58} $on aria-label="AutoCAD">
          <svg width="32" height="32" viewBox="0 0 32 32">
            <path d="M0 0h32v32H0z" fill="#e2444c" /><path d="M0 0h32v15H0z" fill="#f0989b" />
            <path d="M13 4h6l7 19-5 2q-5-7-10 0l-5-2z" fill="#a30d13" /><path d="M16 12l3 8q-3-1-6 0z" fill="#6e070b" />
          </svg>
        </TaskButton>
        <TaskButton $w={58} aria-label="WPS 演示">
          <svg width="28" height="28" viewBox="0 0 28 28"><rect width="28" height="28" rx="4" fill="#2b86ef" /><path d="M5 8l4 11 4-9 4 9 5-11h-8" fill="none" stroke="#fff" strokeWidth="2.200" /><rect x="18" y="18" width="10" height="10" rx="2" fill="#f26a3d" /><path d="M21 26v-6h4v3h-4" fill="none" stroke="#fff" /></svg>
        </TaskButton>
        <TaskButton $w={58} aria-label="播放器">
          <svg width="26" height="30" viewBox="0 0 26 30"><path d="M0 3q0-3 3-3h15l8 7v20q0 3-3 3H3q-3 0-3-3z" fill="#e2661a" /><path d="M18 0l8 7h-8z" fill="#f6a873" /><path d="M9 10v11l9-5.500z" fill="#fff" /></svg>
        </TaskButton>
        <TaskButton $w={58} aria-label="录像">
          <svg width="30" height="32" viewBox="0 0 30 32"><path d="M7 2l8-1 2 8-2 21-8 1-1-18z" fill="#1e1e1e" /><circle cx="7" cy="6" r="5" fill="#555" stroke="#222" /><circle cx="7" cy="6" r="2.500" fill="#cbb" /><path d="M14 10l14-1v12l-14 1z" fill="#c81f24" stroke="#600" /><path d="M18 13h6v5h-6z" fill="none" stroke="#f66" /></svg>
        </TaskButton>
        <Tray>
          <DotGrip />
          <Lang>CH</Lang>
          <TrayButton aria-label="搜狗输入法"><Icon name="sogou" size={18} /></TrayButton>
          <TrayButton aria-label="帮助"><Icon name="helpBlue" size={20} /></TrayButton>
          <TrayStack><Icon name="restore" size={16} /><Caret color="#fff" /></TrayStack>
          {["box", "sync", "thermo", "flag", "safe", "power", "signal", "sound"].map((n) => (
            <TrayButton key={n} aria-label={n}><Icon name={n} size={20} /></TrayButton>
          ))}
          <Clock><span>16:44</span><span>2020/6/20</span></Clock>
          <Notice aria-label="通知"><Icon name="notice" size={24} /><Count>1</Count></Notice>
          <ShowDesktop aria-label="显示桌面" />
        </Tray>
      </Taskbar>
    </Page>
  );
}
